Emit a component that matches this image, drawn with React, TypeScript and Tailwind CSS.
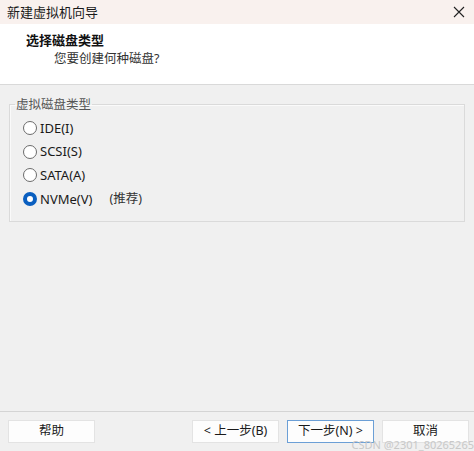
import React from "react";

const font = { fontFamily: '"Segoe UI", "Noto Sans", "Noto Sans CJK SC", sans-serif' };

function Radio({ checked }: { checked?: boolean }) {
  return checked ? (
    <span className="box-border inline-block h-[14px] w-[14px] rounded-full border-[4px] border-[#0a5fc0] bg-white" />
  ) : (
    <span className="box-border inline-block h-[14px] w-[14px] rounded-full border border-[#6b6b6b] bg-white" />
  );
}

function Btn({ children, primary }: { children: React.ReactNode; primary?: boolean }) {
  return (
    <div
      className={
        "flex h-[23px] w-[87px] items-center justify-center bg-[#fdfdfd] text-[12.5px] text-[#1a1a1a] " +
        (primary ? "border border-[#6b9fd6]" : "border border-[#e3e3e3]")
      }
    >
      {children}
    </div>
  );
}

export default function App() {
  const items = [
    { label: "IDE(I)" },
    { label: "SCSI(S)" },
    { label: "SATA(A)" },
    { label: "NVMe(V)", checked: true, extra: "(推荐)" },
  ];
  return (
    <div className="relative flex h-[451px] w-[474px] flex-col overflow-hidden bg-[#f0f0f0]" style={font}>
      {/* title bar */}
      <div className="flex h-[24px] items-center justify-between bg-[#f9f1ee] pl-[7px] pr-[8px]">
        <span className="text-[13px] leading-none text-[#1a1a1a]">新建虚拟机向导</span>
        <svg width="12" height="12" viewBox="0 0 12 12" className="mr-[1px]">
          <path d="M1 1 L11 11 M11 1 L1 11" stroke="#222" strokeWidth="1.1" />
        </svg>
      </div>
      {/* header */}
      <div className="flex h-[61px] flex-col border-b border-[#d9d9d9] bg-white pl-[26px] pt-[8px]">
        <span className="text-[13px] font-bold leading-[16px] text-[#111]">选择磁盘类型</span>
        <span className="ml-[28px] mt-[3px] text-[12.5px] leading-[16px] text-[#333]">您要创建何种磁盘?</span>
      </div>
      {/* body */}
      <div className="flex-1 px-[9px] pt-[12px]">
        <fieldset className="h-[125px] border border-[#dadada] pl-[13px] shadow-[inset_1px_1px_0_#fafafa]">
          <legend className="ml-[-8px] px-[1px] text-[12.5px] leading-[15px] text-[#555]">虚拟磁盘类型</legend>
          <div className="mt-[9px] flex flex-col gap-[9.7px]">
            {items.map((it) => (
              <div key={it.label} className="flex h-[14px] items-center">
                <Radio checked={it.checked} />
                <span className="ml-[3px] text-[13px] leading-none text-[#1a1a1a]">{it.label}</span>
                {it.extra && <span className="ml-[17px] text-[12.5px] leading-none text-[#333]">{it.extra}</span>}
              </div>
            ))}
          </div>
        </fieldset>
      </div>
      {/* footer */}
      <div className="flex h-[40px] items-start border-t border-[#d4d4d4] pl-[8px] pt-[8px]">
        <Btn>帮助</Btn>
        <div className="ml-[97px] flex gap-[8px]">
          <Btn>&lt; 上一步(B)</Btn>
          <Btn primary>下一步(N) &gt;</Btn>
          <Btn>取消</Btn>
        </div>
      </div>
      <span className="pointer-events-none absolute bottom-[1px] right-[0px] text-[11px] leading-none text-[#c8c8c8]">
        CSDN @2301_80265265
      </span>
    </div>
  );
}
